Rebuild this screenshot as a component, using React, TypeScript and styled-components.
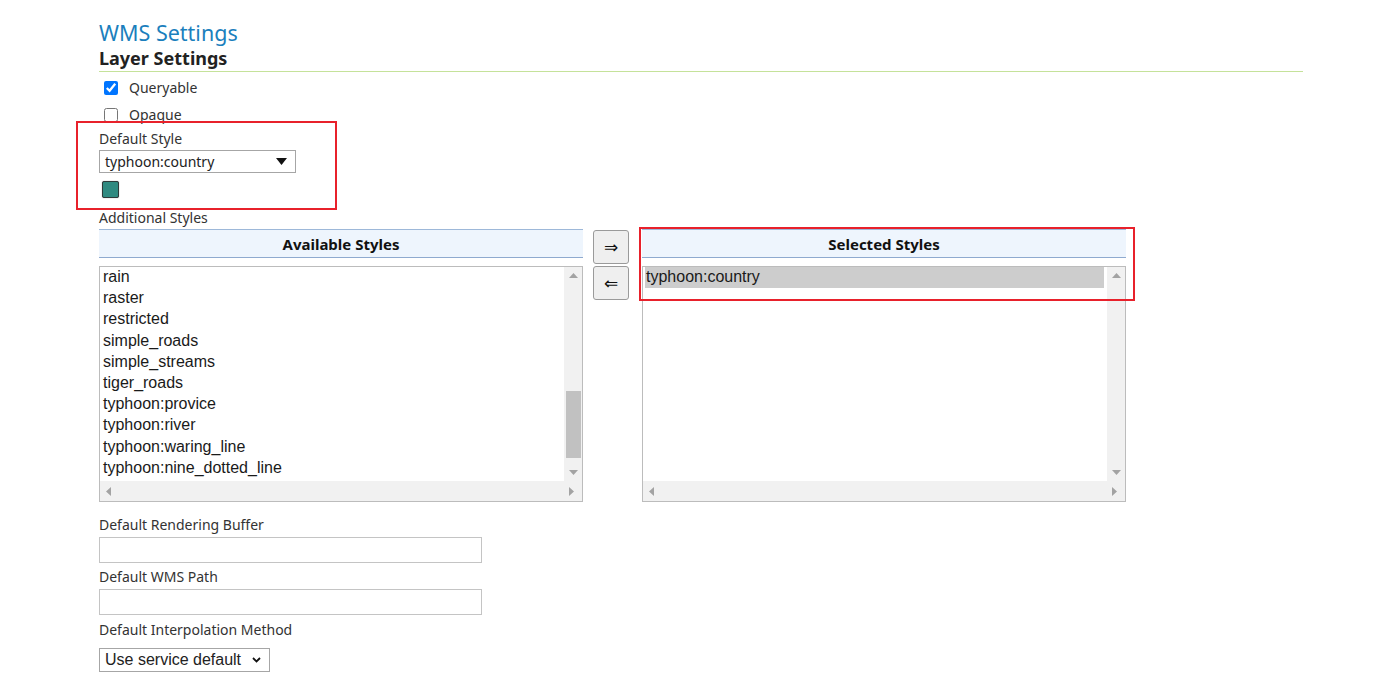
import React from "react";
import styled, { createGlobalStyle } from "styled-components";

const GlobalStyle = createGlobalStyle`
  html, body {
    margin: 0;
    padding: 0;
    background: #fff;
    font-family: "Noto Sans", "Liberation Sans", sans-serif;
    color: #333;
  }
`;

const Page = styled.div`
  position: relative;
  width: 1375px;
  height: 678px;
  overflow: hidden;
  padding: 18px 0 0 99px;
  box-sizing: border-box;
`;

const Content = styled.div`
  width: 1204px;
  display: flex;
  flex-direction: column;
`;

const Title = styled.h1`
  margin: 0;
  font-size: 21.5px;
  line-height: 30px;
  font-weight: 400;
  color: #1b7fbd;
`;

const Heading = styled.h2`
  margin: 0;
  font-size: 18px;
  line-height: 21px;
  font-weight: 700;
  color: #222;
  border-bottom: 1px solid #c5e29a;
  padding-bottom: 2px;
`;

const CheckRow = styled.label<{ first?: boolean }>`
  display: flex;
  align-items: center;
  height: 27px;
  font-size: 14px;
  gap: 11px;
  margin-top: ${(p) => (p.first ? "2px" : "0")};

  input {
    margin: 0 0 0 5px;
    width: 14px;
    height: 14px;
    accent-color: #0075ff;
  }
`;

const Label = styled.div<{ mt?: number }>`
  font-size: 14px;
  line-height: 18px;
  margin-top: ${(p) => p.mt ?? 0}px;
  color: #333;
`;

const FakeSelect = styled.div<{ w: number; mt?: number; arial?: boolean }>`
  width: ${(p) => p.w}px;
  height: ${(p) => (p.arial ? 24 : 23)}px;
  margin-top: ${(p) => p.mt ?? 2}px;
  box-sizing: border-box;
  border: 1px solid #a6a6a6;
  display: flex;
  align-items: center;
  justify-content: space-between;
  padding: 0 8px 0 5px;
  font-family: ${(p) => (p.arial ? '"Liberation Sans", Arial, sans-serif' : '"Noto Sans", sans-serif')};
  font-size: ${(p) => (p.arial ? 16 : 14)}px;
  color: #222;
  background: #fff;
`;

const Swatch = styled.div`
  width: 15px;
  height: 15px;
  margin: 8px 0 0 3px;
  background: #2f8a80;
  border: 1px solid #2e3b39;
  border-radius: 2px;
  box-shadow: 0 0 1px #777;
`;

const StylesRow = styled.div`
  display: flex;
  align-items: flex-start;
  margin-top: 2px;
`;

const Column = styled.div`
  width: 484px;
  display: flex;
  flex-direction: column;
`;

const ColumnHeader = styled.div`
  height: 29px;
  box-sizing: border-box;
  background: #eef5fd;
  border-top: 1px solid #9db8d9;
  border-bottom: 1px solid #8faacf;
  display: flex;
  align-items: center;
  justify-content: center;
  font-size: 15px;
  font-weight: 700;
  color: #111;
`;

const ListBox = styled.div`
  margin-top: 8px;
  height: 236px;
  box-sizing: border-box;
  border: 1px solid #bcbcbc;
  display: grid;
  grid-template-columns: 1fr 18px;
  grid-template-rows: 1fr 20px;
  background: #fff;
`;

const Items = styled.div`
  padding: 0 0 0 2px;
  overflow: hidden;
  font-family: "Liberation Sans", Arial, sans-serif;
  font-size: 16px;
  color: #1a1a1a;
`;

const Item = styled.div<{ selected?: boolean }>`
  height: 21.2px;
  line-height: 20px;
  padding-left: 1px;
  margin-right: ${(p) => (p.selected ? "3px" : "0")};
  background: ${(p) => (p.selected ? "#cdcdcd" : "transparent")};
`;

const VTrack = styled.div`
  background: #f1f1f1;
  position: relative;
  display: flex;
  flex-direction: column;
  align-items: center;
  justify-content: space-between;
  padding: 6px 0;
  box-sizing: border-box;
`;

const Thumb = styled.div`
  position: absolute;
  left: 2px;
  right: 1px;
  top: 124px;
  height: 67px;
  background: #c1c1c1;
`;

const HTrack = styled.div`
  grid-column: 1 / span 2;
  background: #f1f1f1;
  display: flex;
  align-items: center;
  justify-content: space-between;
  padding: 0 8px 0 6px;
`;

const Arrow = styled.svg`
  display: block;
`;

const Buttons = styled.div`
  display: flex;
  flex-direction: column;
  gap: 2px;
  margin: 1px 13px 0 10px;
`;

const MoveButton = styled.button`
  width: 36px;
  height: 34px;
  padding: 0;
  border: 1px solid #9a9a9a;
  border-radius: 3px;
  background: #efefef;
  font-family: "DejaVu Sans", sans-serif;
  font-size: 17px;
  color: #111;
`;

const TextInput = styled.input`
  width: 383px;
  height: 26px;
  margin-top: 3px;
  box-sizing: border-box;
  border: 1px solid #c4c4c4;
  padding: 0 4px;
  font-size: 14px;
`;

const RedBox = styled.div<{ l: number; t: number; w: number; h: number }>`
  position: absolute;
  left: ${(p) => p.l}px;
  top: ${(p) => p.t}px;
  width: ${(p) => p.w}px;
  height: ${(p) => p.h}px;
  box-sizing: border-box;
  border: 2px solid #e8212b;
  pointer-events: none;
`;

const Up = () => (
  <Arrow width="9" height="5" viewBox="0 0 9 5">
    <path d="M0 5 L4.5 0 L9 5 Z" fill="#a3a3a3" />
  </Arrow>
);
const Down = () => (
  <Arrow width="9" height="5" viewBox="0 0 9 5">
    <path d="M0 0 L4.5 5 L9 0 Z" fill="#a3a3a3" />
  </Arrow>
);
const Left = () => (
  <Arrow width="5" height="9" viewBox="0 0 5 9">
    <path d="M5 0 L0 4.5 L5 9 Z" fill="#a3a3a3" />
  </Arrow>
);
const Right = () => (
  <Arrow width="5" height="9" viewBox="0 0 5 9">
    <path d="M0 0 L5 4.5 L0 9 Z" fill="#a3a3a3" />
  </Arrow>
);

function StyleList({ items, selected, thumb }: { items: string[]; selected?: string; thumb?: boolean }) {
  return (
    <ListBox>
      <Items>
        {items.map((s) => (
          <Item key={s} selected={s === selected}>
            {s}
          </Item>
        ))}
      </Items>
      <VTrack>
        <Up />
        {thumb && <Thumb />}
        <Down />
      </VTrack>
      <HTrack>
        <Left />
        <Right />
      </HTrack>
    </ListBox>
  );
}

const available = [
  "rain",
  "raster",
  "restricted",
  "simple_roads",
  "simple_streams",
  "tiger_roads",
  "typhoon:provice",
  "typhoon:river",
  "typhoon:waring_line",
  "typhoon:nine_dotted_line",
];

export default function App() {
  return (
    <>
      <GlobalStyle />
      <Page>
        <Content>
          <Title>WMS Settings</Title>
          <Heading>Layer Settings</Heading>
          <CheckRow first>
            <input type="checkbox" defaultChecked />
            Queryable
          </CheckRow>
          <CheckRow>
            <input type="checkbox" />
            Opaque
          </CheckRow>
          <Label mt={2}>Default Style</Label>
          <FakeSelect w={197}>
            typhoon:country
            <svg width="11" height="7" viewBox="0 0 11 7">
              <path d="M0 0 L11 0 L5.5 7 Z" fill="#111" />
            </svg>
          </FakeSelect>
          <Swatch />
          <Label mt={11}>Additional Styles</Label>
          <StylesRow>
            <Column>
              <ColumnHeader>Available Styles</ColumnHeader>
              <StyleList items={available} thumb />
            </Column>
            <Buttons>
              <MoveButton>⇒</MoveButton>
              <MoveButton>⇐</MoveButton>
            </Buttons>
            <Column>
              <ColumnHeader>Selected Styles</ColumnHeader>
              <StyleList items={["typhoon:country"]} selected="typhoon:country" />
            </Column>
          </StylesRow>
          <Label mt={14}>Default Rendering Buffer</Label>
          <TextInput type="text" />
          <Label mt={5}>Default WMS Path</Label>
          <TextInput type="text" />
          <Label mt={6}>Default Interpolation Method</Label>
          <FakeSelect w={171} mt={9} arial>
            Use service default
            <svg width="9" height="6" viewBox="0 0 9 6">
              <path d="M1 1 L4.5 4.5 L8 1" fill="none" stroke="#111" strokeWidth="1.8" />
            </svg>
          </FakeSelect>
        </Content>
        <RedBox l={76} t={121} w={261} h={89} />
        <RedBox l={639} t={227} w={496} h={74} />
      </Page>
    </>
  );
}
